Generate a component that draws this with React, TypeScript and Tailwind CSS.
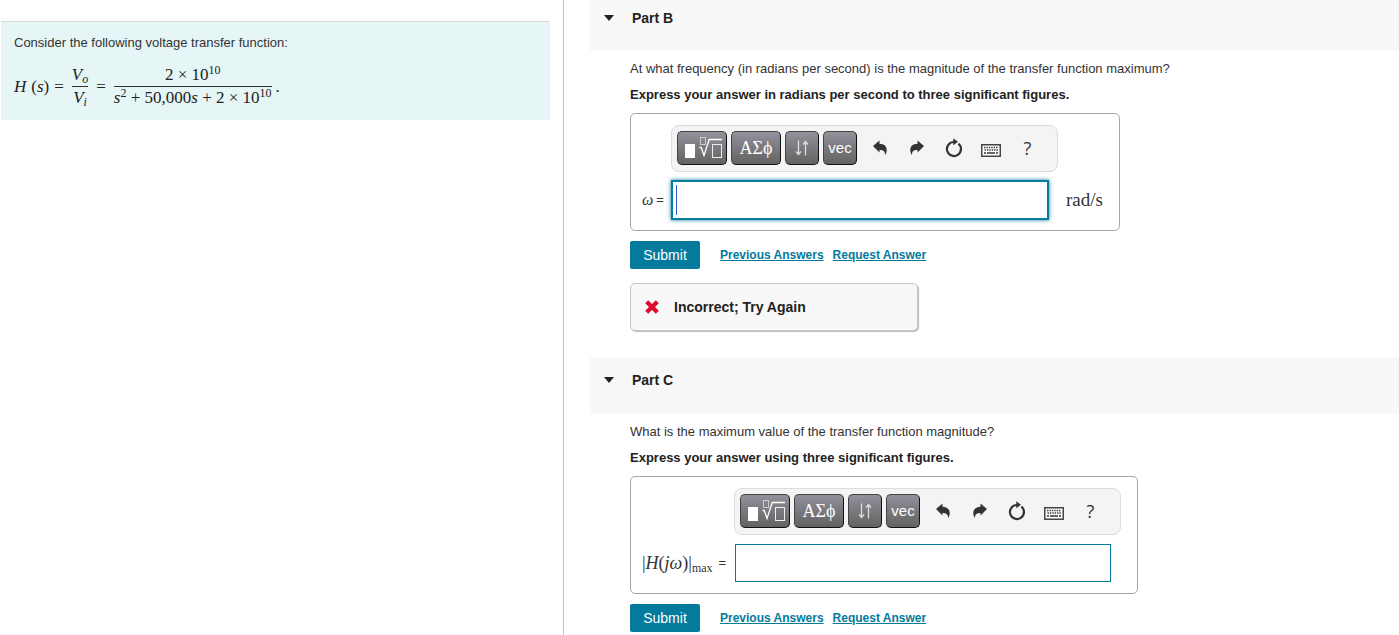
import React from 'react';

const INK = '#333333';

const UndoIcon = () => (
    <svg width="14" height="16" viewBox="0 0 14 16" fill={INK}>
        <path d="M0 6 6.500.5v3.300c4.600.2 7.500 2.500 7.200 6.800-.1 1.800-.7 3.200-1.700 4.700.3-3.400-1.300-5.300-5.500-5.200v2.500z" />
    </svg>
);

const RedoIcon = () => (
    <svg width="14" height="16" viewBox="0 0 14 16" fill={INK}>
        <path d="M14 6 7.500.5v3.300C2.900 4 0 6.300.3 10.600c.1 1.800.7 3.200 1.700 4.700-.3-3.400 1.300-5.300 5.500-5.200v2.500z" />
    </svg>
);

const ResetIcon = () => (
    <svg width="18" height="20" viewBox="0 0 18 20">
        <path d="M13.400 5.600A7 7 0 1 1 9 4" fill="none" stroke={INK} strokeWidth="2.200" />
        <path d="M8.300.3 13 3.800 8.300 7.200z" fill={INK} />
    </svg>
);

const KeyboardIcon = () => (
    <svg width="20" height="13" viewBox="0 0 20 13">
        <rect x=".75" y=".75" width="18.500" height="11.500" fill="#fff" stroke="#444" strokeWidth="1.500" />
        <path d="M3 3.500h14M3.500 6h13.500" stroke={INK} strokeWidth="1.300" strokeDasharray="1.400 1" />
        <path d="M3 9h2M6 9h8M15 9h2" stroke={INK} strokeWidth="1.400" />
    </svg>
);

const TemplateIcon = () => (
    <svg width="40" height="24" viewBox="0 0 40 24" className="shrink-0" fill="none" stroke="#fff">
        <rect x="3" y="8" width="10" height="14" fill="#fff" stroke="none" />
        <rect x="18.500" y="1.500" width="5" height="7" stroke="#ccc" />
        <path d="M17.500 11.500h1.700l2.800 8L27.200 3.500H40" strokeWidth="1.300" />
        <rect x="30.500" y="8.500" width="9" height="13" stroke="#eee" />
    </svg>
);

const ArrowsIcon = () => (
    <svg width="14" height="18" viewBox="0 0 14 18" fill="none" stroke="#ddd" strokeWidth="1.300">
        <path d="M3.500 1.500V15M1 12.500l2.500 3 2.500-3" />
        <path d="M10.500 16.500V3M8 5.500l2.500-3 2.500 3" />
    </svg>
);

const CrossIcon = () => (
    <svg width="14" height="14" viewBox="0 0 14 14" stroke="#dd0a2e" strokeWidth="4.200">
        <path d="M1.700 1.700l10.600 10.600M12.300 1.700 1.700 12.300" />
    </svg>
);

const keyClass =
    'flex h-[34px] items-center justify-center rounded-[5px] border border-[#111] border-t-[#444] border-l-[#444] bg-linear-to-b from-[#93919b] to-[#626262] text-white';
const toolClass = 'flex h-[34px] w-[37px] items-center justify-center';

const Toolbar = () => (
    <div className="flex h-[47px] w-[387px] items-start gap-1 rounded-lg border border-[#dcdcdc] bg-[#f4f4f4] p-[5px]">
        <button aria-label="Templates" className={`${keyClass} w-[50px]`}><TemplateIcon /></button>
        <button className={`${keyClass} w-[50px] font-['Liberation_Serif',serif] text-[18px]`}>ΑΣϕ</button>
        <button aria-label="Subscript and superscript" className={`${keyClass} w-[34px]`}><ArrowsIcon /></button>
        <button className={`${keyClass} w-[34px] text-[15px]`}>vec</button>
        <div className="flex">
            <button aria-label="Undo" className={toolClass}><UndoIcon /></button>
            <button aria-label="Redo" className={toolClass}><RedoIcon /></button>
            <button aria-label="Reset" className={toolClass}><ResetIcon /></button>
            <button aria-label="Keyboard" className={`${toolClass} pt-1`}><KeyboardIcon /></button>
            <button aria-label="Help" className={`${toolClass} font-['Open_Sans',sans-serif] text-[18px]`}>?</button>
        </div>
    </div>
);

interface AnswerBoxProps {
    id: string;
    label: React.ReactNode;
    labelClass: string;
    unit?: string;
    active?: boolean;
}

const AnswerBox: React.FC<AnswerBoxProps> = ({ id, label, labelClass, unit, active }) => (
    <div className="flex w-fit items-end rounded-[5px] border border-[#a6a6a6] pt-[11px] pr-4 pb-[11px] pl-[11px]">
        <label htmlFor={id} className={`flex h-[38px] items-center whitespace-nowrap ${labelClass}`}>{label}</label>
        <div className="flex flex-col gap-[9px]">
            <Toolbar />
            <div className="relative mr-[10px] ml-px flex">
                <input
                    id={id}
                    type="text"
                    className={`h-[38px] w-full border border-[#047a9c] bg-white px-1 outline-none ${
                        active ? 'shadow-[0_0_0_1px_#047a9c,0_0_4px_1px_#047a9c]' : ''
                    }`}
                />
                {active && <span className="absolute top-1 left-1 h-[30px] w-px bg-[#3355cc]" />}
            </div>
        </div>
        {unit && (
            <span className="flex h-[38px] items-center pl-2 font-['Liberation_Serif',serif] text-[19px]">{unit}</span>
        )}
    </div>
);

const Actions = () => (
    <div className="mt-[10px] flex items-center">
        <button className="h-7 w-[70px] rounded-xs bg-[#047a9c] text-[14px] text-white">Submit</button>
        <a href="#previous" className="ml-5 text-[12px] font-bold text-[#047a9c] underline">Previous Answers</a>
        <a href="#request" className="ml-[9px] text-[12px] font-bold text-[#047a9c] underline">Request Answer</a>
    </div>
);

const PartHeader = ({ title, className }: { title: string; className: string }) => (
    <div className={`flex items-start bg-[#f8f8f8] pl-[14px] ${className}`}>
        <button className="flex h-5 items-center gap-[18px] text-[14px] font-bold text-[#222]">
            <svg width="10" height="6" viewBox="0 0 10 6" fill="#222"><path d="M0 0h10L5 6z" /></svg>
            {title}
        </button>
    </div>
);

const Question = ({ text, hint }: { text: string; hint: string }) => (
    <div className="mb-2 flex flex-col gap-[6px] pt-2 leading-5">
        <p>{text}</p>
        <p className="font-bold text-[#222]">{hint}</p>
    </div>
);

const Formula = () => (
    <div className="mt-[11px] flex items-center gap-2 font-['Liberation_Serif',serif] text-[17px] leading-[22px] text-[#222]">
        <span className="flex gap-[5px]">
            <i>H</i>
            <span>(<i>s</i>)</span>
            <span>=</span>
        </span>
        <span className="flex flex-col text-center">
            <span className="border-b border-[#333]"><i>V<sub className="text-[12px] leading-none">o</sub></i></span>
            <span><i>V<sub className="text-[12px] leading-none">i</sub></i></span>
        </span>
        <span>=</span>
        <span className="flex flex-col text-center">
            <span className="border-b border-[#333]">2 × 10<sup className="text-[12px] leading-none">10</sup></span>
            <span><i>s</i><sup className="text-[12px] leading-none">2</sup> + 50,000<i>s</i> + 2 × 10<sup className="text-[12px] leading-none">10</sup></span>
        </span>
        <span className="-ml-1">.</span>
    </div>
);

export default function App() {
    return (
        <div className="flex min-h-screen bg-white font-['Liberation_Sans',Arial,sans-serif] text-[13px] text-[#333]">
            <aside className="w-[564px] shrink-0 border-r border-[#bcc4cc] pt-[21px] pr-[13px] pl-px">
                <div className="border-t border-[#d5dcdc] bg-[#e6f6f6] pt-[11px] pb-[11px] pl-[13px]">
                    <p className="leading-5">Consider the following voltage transfer function:</p>
                    <Formula />
                </div>
            </aside>
            <main className="min-w-0 flex-1 pl-[26px]">
                <section>
                    <PartHeader title="Part B" className="h-[51px] pt-2" />
                    <div className="pl-10">
                        <Question
                            text="At what frequency (in radians per second) is the magnitude of the transfer function maximum?"
                            hint="Express your answer in radians per second to three significant figures."
                        />
                        <AnswerBox
                            id="omega"
                            active
                            unit="rad/s"
                            labelClass="w-[29px]"
                            label={
                                <span className="flex items-center gap-[3px]">
                                    <i className="font-['Liberation_Serif',serif] text-[16px]">ω</i>
                                    <span>=</span>
                                </span>
                            }
                        />
                        <Actions />
                        <div className="mt-[14px] flex h-12 w-[288px] items-center gap-[15px] rounded-[5px] border border-[#c8c8c8] bg-[#f8f8f8] pl-[14px] text-[14px] font-bold text-[#222] shadow-[1px_1px_1px_#bbb]">
                            <CrossIcon />
                            Incorrect; Try Again
                        </div>
                    </div>
                </section>
                <section className="mt-[26px]">
                    <PartHeader title="Part C" className="h-[57px] pt-[13px]" />
                    <div className="pl-10">
                        <Question
                            text="What is the maximum value of the transfer function magnitude?"
                            hint="Express your answer using three significant figures."
                        />
                        <AnswerBox
                            id="magnitude"
                            labelClass="w-[92px]"
                            label={
                                <span className="flex items-center gap-[6px]">
                                    <span className="font-['Liberation_Serif',serif] text-[18px]">
                                        |<i>H</i>(<i>jω</i>)|<sub className="text-[12px] leading-none">max</sub>
                                    </span>
                                    <span>=</span>
                                </span>
                            }
                        />
                        <Actions />
                    </div>
                </section>
            </main>
        </div>
    );
}
